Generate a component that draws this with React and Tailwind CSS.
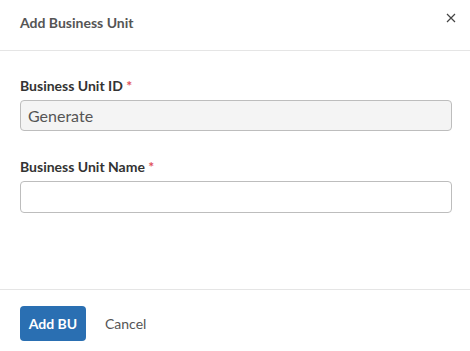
import React from "react";

export default function App() {
  return (
    <div className="w-[470px] h-[351px] bg-white flex flex-col text-[#333]" style={{ fontFamily: "Lato, 'Liberation Sans', sans-serif" }}>
      <div className="h-[51px] border-b border-[#e5e5e5] flex items-center justify-between pl-[20px] pr-[14px] shrink-0">
        <div className="text-[14px] font-bold text-[#555] mt-[-5px]">Add Business Unit</div>
        <svg width="10" height="10" viewBox="0 0 10 10" className="mt-[-14px]">
          <path d="M1 1L9 9M9 1L1 9" stroke="#444" strokeWidth="1.2" />
        </svg>
      </div>
      <div className="flex-1 pl-[20px] pr-[18px] pt-[26px]">
        <div className="flex flex-col">
          <label className="text-[14px] font-bold text-[#333] leading-[18px]">
            Business Unit ID <span className="text-[#e0505a]">*</span>
          </label>
          <div className="mt-[5px] h-[31px] rounded-[4px] border border-[#bdbdbd] bg-[#f4f4f4] flex items-center px-[7px] text-[16px] text-[#555]">
            Generate
          </div>
        </div>
        <div className="flex flex-col mt-[27px]">
          <label className="text-[14px] font-bold text-[#333] leading-[18px]">
            Business Unit Name <span className="text-[#e0505a]">*</span>
          </label>
          <div className="mt-[5px] h-[32px] rounded-[4px] border border-[#bdbdbd] bg-white" />
        </div>
      </div>
      <div className="h-[62px] border-t border-[#e5e5e5] flex items-center px-[20px] gap-[19px] shrink-0">
        <button className="h-[35px] w-[66px] rounded-[4px] bg-[#2a6fb2] text-white text-[14px] font-bold mt-[6px]">Add BU</button>
        <span className="text-[14px] text-[#555] mt-[6px]">Cancel</span>
      </div>
    </div>
  );
}
